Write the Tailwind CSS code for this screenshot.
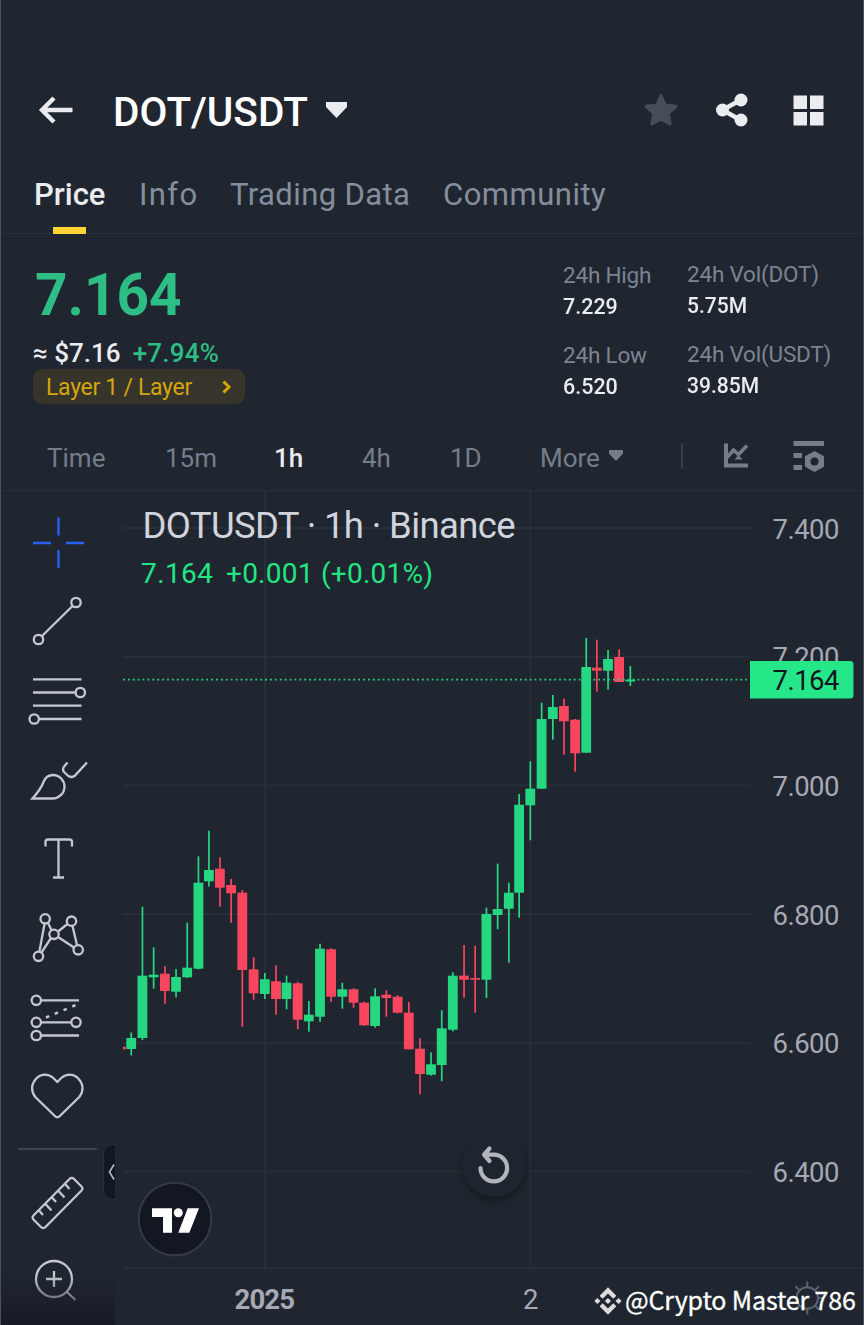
<!DOCTYPE html>
<html lang="en">
<head>
	<meta charset="UTF-8">
	<meta name="viewport" content="width=device-width, initial-scale=1.0">
	<title>DOT/USDT</title>
	<script src="https://cdn.jsdelivr.net/npm/@tailwindcss/browser@4"></script>
</head>
<body class="bg-[#202630] font-['Roboto','Liberation_Sans',sans-serif]">
<div class="relative flex flex-col w-[864px] h-[1325px] overflow-hidden">

	<!-- Header -->
	<header class="flex items-center h-[156px] pt-[68px] pl-[38px] pr-[40px]">
		<svg class="w-9 h-9 mb-1" viewBox="0 0 36 36" fill="none" stroke="#eaecef" stroke-width="4.400">
			<path d="M34.500 18H4M16 6 4 18l12 12"/>
		</svg>
		<h1 class="w-[213px] ml-[39px] text-[40.500px] font-medium text-white leading-none">DOT/USDT</h1>
		<svg class="w-[21px] h-4 mb-1" viewBox="0 0 21 16" fill="#eaecef"><path d="M0 0h21v5L10.500 16 0 5z"/></svg>
		<div class="flex items-center ml-auto mb-1">
			<svg class="w-9 h-9" viewBox="0 0 36 36" fill="#474d57" stroke="#474d57" stroke-width="3" stroke-linejoin="round">
				<path d="m18 3.500 4.300 9.500 10.700 1.300-7.800 7.100 2 10.600-9.200-4.800L8.800 32l2-10.600L3 14.300 13.700 13z"/>
			</svg>
			<svg class="w-9 h-9 ml-[36px]" viewBox="0 0 36 36" fill="#eaecef">
				<path d="M25.500 8 7.500 18l18 10" fill="none" stroke="#eaecef" stroke-width="4.500"/>
				<circle cx="7.500" cy="18" r="6.500"/><circle cx="26" cy="8" r="6.500"/><circle cx="26" cy="28" r="6.500"/>
			</svg>
			<svg class="w-[31px] h-[31px] ml-[42px]" viewBox="0 0 31 31" fill="#eaecef">
				<path d="M.5.5h13.500V14H.5zM17 .5h13.500V14H17zM.5 17h13.500v13.500H.5zM17 17h13.500v13.500H17z"/>
			</svg>
		</div>
	</header>

	<!-- Tabs -->
	<nav class="flex h-[78px] pl-[34px] border-b border-[#2a303a] text-[31px] leading-[77px] text-[#848e9c]">
		<a class="relative w-[105px] font-medium text-[#eaecef]">Price
			<span class="absolute left-[19px] -bottom-px w-[33px] h-[7px] bg-[#fcd535]"></span>
		</a>
		<a class="w-[91px] tracking-[1.400px]">Info</a>
		<a class="w-[213px] tracking-[0.400px]">Trading Data</a>
		<a class="tracking-[0.500px]">Community</a>
	</nav>

	<!-- Price and 24h stats -->
	<section class="flex h-[192px] pl-[33px]">
		<div class="w-[530px] pt-[31px]">
			<div class="ml-[2px] origin-left scale-x-[0.945] text-[60px] leading-[60px] font-bold text-[#2ebd85]">7.164</div>
			<div class="flex gap-[12px] mt-[13px] text-[26px] leading-[30px] font-medium">
				<span class="text-[#eaecef]">≈ $7.16</span>
				<span class="tracking-[0.200px] text-[#2ebd85]">+7.94%</span>
			</div>
			<div class="flex items-center w-[212px] h-[35px] mt-px pl-[13px] pr-[13px] rounded-[9px] bg-[#37342c] text-[23px] text-[#d5a50b]">
				<span class="pt-[3px] tracking-[-0.300px]">Layer 1 / Layer</span>
				<svg class="w-[10px] h-[14px] ml-auto" viewBox="0 0 10 14" fill="none" stroke="#d5a50b" stroke-width="3"><path d="m1.500 1.500 5.500 5.500-5.500 5.500"/></svg>
			</div>
		</div>
		<div class="w-[124px] pt-[26px] text-[22.500px] leading-[31px] text-[#eaecef]">
			<div class="tracking-[-0.200px] text-[#7c8491]">24h High</div>
			<div class="origin-left scale-x-[0.955] font-medium">7.229</div>
			<div class="mt-[18px] tracking-[-0.200px] text-[#7c8491]">24h Low</div>
			<div class="origin-left scale-x-[0.955] font-medium">6.520</div>
		</div>
		<div class="pt-[25px] text-[22.500px] leading-[31px] text-[#eaecef]">
			<div class="tracking-[-0.200px] text-[#7c8491]">24h Vol(DOT)</div>
			<div class="origin-left scale-x-[0.935] font-medium">5.75M</div>
			<div class="mt-[18px] tracking-[-0.200px] text-[#7c8491]">24h Vol(USDT)</div>
			<div class="origin-left scale-x-[0.935] font-medium">39.85M</div>
		</div>
	</section>

	<!-- Intervals -->
	<nav class="flex items-center h-[65px] pl-[47px] border-b border-[#2a303a] text-[26px] text-[#767d8a]">
		<span class="w-[118px]">Time</span>
		<span class="w-[109px]">15m</span>
		<span class="w-[88px] font-medium text-[#eaecef]">1h</span>
		<span class="w-[88px]">4h</span>
		<span class="w-[90px]">1D</span>
		<span class="w-[69px]">More</span>
		<svg class="w-[14px] h-[11px] mb-[6px]" viewBox="0 0 14 11" fill="#767d8a"><path d="M0 0h14v3.500L7 11 0 3.500z"/></svg>
		<span class="w-[2px] h-[26px] ml-[58px] mb-1 bg-[#373d47]"></span>
		<svg class="w-6 h-[25px] ml-[41px] mb-[6px]" viewBox="0 0 24 25" fill="none" stroke="#767d8a" stroke-width="4">
			<path d="M2 .5v22h22"/>
			<path d="m3 14.500 6.500-7.500 5 4.500 8.500-9" stroke-width="3.500"/>
			<path d="m14.500 12 4 4.500h-8z" fill="#767d8a" stroke="none"/>
		</svg>
		<svg class="w-8 h-8 ml-[45px] mb-[2px]" viewBox="0 0 32 32" fill="#767d8a">
			<path d="M.5 0H31v5H.5zM.5 12H9v5H.5zM.5 24H9v5H.5z"/>
			<path fill-rule="evenodd" d="m21.500 10 9.500 5.300v10.400L21.500 31 12 25.700V15.300zm0 6.500a4 4 0 1 0 0 8 4 4 0 0 0 0-8z"/>
		</svg>
	</nav>

	<div class="flex h-[834px]">
		<!-- Drawing tools -->
		<aside class="relative flex flex-col w-[115px] pt-3 pl-[28px] overflow-hidden">
			<svg class="w-[60px] h-[79px]" viewBox="28 503 60 79" fill="none" stroke="#2962ff" stroke-width="2.300">
				<path d="M58.500 517.500v18M58.500 550v18M33 543h18M66 543h18"/>
			</svg>
			<svg class="w-[60px] h-[79px]" viewBox="28 582 60 79" fill="none" stroke="#c5c7d1" stroke-width="2.300">
				<circle cx="76" cy="602.500" r="4.700"/><circle cx="38.500" cy="639.500" r="4.700"/><path d="m42 636 30.500-30"/>
			</svg>
			<svg class="w-[60px] h-[79px]" viewBox="28 661 60 79" fill="none" stroke="#c5c7d1" stroke-width="2.300">
				<path d="M33 679.300h48.500M33 692.500h42.500M33 705.700h48.500M39 719h42.500"/><circle cx="80.300" cy="692.500" r="4.700"/><circle cx="34.200" cy="719" r="4.700"/>
			</svg>
			<svg class="w-[60px] h-[79px]" viewBox="28 740 60 79" fill="none" stroke="#c5c7d1" stroke-width="2.300">
				<path d="M32.500 798.500H52a12 12 0 0 0 12.500-12c0-6-5-11.500-11.500-11.500-5 0-8 3-9.500 7-2.500 7-7 12-11 16.500zM67.500 762.500l-3 3.500q-3 3.500 0 6.500l4 3.500q3 2 6 0l12.500-13.500"/>
			</svg>
			<svg class="w-[60px] h-[79px]" viewBox="28 819 60 79" fill="none" stroke="#c5c7d1" stroke-width="2.300">
				<path d="M45.500 846.500V842q0-2.500 2.500-2.500h21.500q2.500 0 2.500 2.500v4.500M58.500 839.500v38M53 877.500h11"/>
			</svg>
			<svg class="w-[60px] h-[79px]" viewBox="28 898 60 79" fill="none" stroke="#c5c7d1" stroke-width="2.300">
				<path d="m44.500 924-5 27M48 923l3.500 7M41.500 952.500l9.500-14.500M58 931.500l9.500-7.500M58 937l16 10.500M72.500 926l4.500 19"/>
				<circle cx="45.200" cy="918.800" r="4.700"/><circle cx="71.500" cy="921.200" r="4.700"/><circle cx="54" cy="934.300" r="4.700"/><circle cx="38.500" cy="956.300" r="4.700"/><circle cx="78.200" cy="949.800" r="4.700"/>
			</svg>
			<svg class="w-[60px] h-[79px]" viewBox="28 977 60 79" fill="none" stroke="#c5c7d1" stroke-width="2.300">
				<path d="M41.500 1000.300H79M41.500 1022.300h29.500M41.500 1035.500H79"/>
				<path d="m46 1017.500 31-13" stroke-width="2.500" stroke-dasharray="3.500 6"/>
				<circle cx="36.300" cy="1000.300" r="4.700"/><circle cx="36.300" cy="1022.300" r="4.700"/><circle cx="76" cy="1022.300" r="4.700"/><circle cx="36.300" cy="1035.500" r="4.700"/>
			</svg>
			<svg class="w-[60px] h-[79px]" viewBox="28 1056 60 79" fill="none" stroke="#c5c7d1" stroke-width="2.300" stroke-linejoin="round">
				<path d="m57.300 1082-4-4c-5-4.500-12-4.500-16.500 0-6 6-6 13-1.500 19l19.500 19q2.500 2.500 5 0l19.500-19c4.500-6 4.500-13-1.500-19-4.500-4.500-11.500-4.500-16.500 0z"/>
			</svg>
			<div class="w-[79px] h-[2px] mt-[13px] -ml-[10px] mb-[14px] bg-[#3f444f]"></div>
			<svg class="w-[60px] h-[79px]" viewBox="28 1164 60 79" fill="none" stroke="#c5c7d1" stroke-width="2.300" stroke-linejoin="round">
				<path d="M69.500 1179q2.300-2.300 4.600 0l7.200 7.200q2.300 2.300 0 4.600L45.500 1227q-2.300 2.300-4.600 0l-7.200-7.200q-2.300-2.300 0-4.600zM39 1210.500l4 4.500M45.500 1204l6 6.500M52 1197.500l4 4.500M58.500 1191l6 6.500M65.500 1184.500l4 4.500"/>
			</svg>
			<svg class="w-[60px] h-[79px]" viewBox="28 1243 60 79" fill="none" stroke="#c5c7d1" stroke-width="2.300">
				<circle cx="54" cy="1279" r="18"/><path d="M46 1279h16M54 1271v16M67 1292l8.500 8"/>
			</svg>
			<div class="absolute left-0 bottom-0 w-[115px] h-[50px] bg-linear-to-b from-[#161a25]/0 to-[#161a25]"></div>
			<div class="absolute left-[103px] top-[653px] w-[24px] h-[56px] rounded-[10px] border border-[#2a2e39] bg-[#131722]">
				<svg class="w-[12px] h-[54px]" viewBox="0 0 12 54" fill="none" stroke="#b2b5be" stroke-width="1.700"><path d="M10 19.500 5.500 27l4.500 7.500"/></svg>
			</div>
		</aside>

		<!-- Chart -->
		<svg class="w-[749px] h-[834px]" viewBox="115 491 749 834" font-family="Roboto, 'Liberation Sans', sans-serif">
			<path fill="none" stroke="#292e38" stroke-width="2" d="M123 528h627M123 656.700h627M123 785.500h627M123 914h627M123 1043h627M123 1171.500h627M123 1268.300h741M265 491v777M530.300 491v777"/>
			<g id="candles"></g>
			<path d="M123 679.700h627" stroke="#2bd07f" stroke-width="1.700" stroke-dasharray="1.800 3.100"/>

			<text x="142.500" y="538" font-size="36.500" fill="#d1d4dc" textLength="373">DOTUSDT · 1h · Binance</text>
			<g font-size="28" fill="#22e584">
				<text x="141" y="582.500" textLength="72">7.164</text>
				<text x="226" y="582.500" textLength="207">+0.001 (+0.01%)</text>
			</g>

			<g font-size="27.500" fill="#a6a9b3">
				<text x="772.500" y="538.500" textLength="67">7.400</text>
				<text x="772.500" y="667" textLength="67">7.200</text>
				<text x="772.500" y="796" textLength="67">7.000</text>
				<text x="772.500" y="924.500" textLength="67">6.800</text>
				<text x="772.500" y="1053" textLength="67">6.600</text>
				<text x="772.500" y="1181.500" textLength="67">6.400</text>
				<text x="234.500" y="1308.500" font-weight="700" textLength="60.500">2025</text>
				<text x="523" y="1308.500">2</text>
			</g>
			<path fill="#26e788" d="M750 661h100q3.500 0 3.500 3.500V695q0 3.500-3.500 3.500H750z"/>
			<text x="772.500" y="689.500" font-size="27.500" fill="#10151d" textLength="67">7.164</text>

			<!-- TradingView badge -->
			<circle cx="175" cy="1219" r="36.300" fill="#131722" stroke="#363a45" stroke-width="2"/>
			<path fill="#fff" d="M152 1208.300h20v24.400h-9V1217h-11zM187.700 1208.300h11.300l-9.700 24.400h-11z"/>
			<circle cx="178.300" cy="1212.700" r="4.500" fill="#fff"/>

			<!-- Reset button -->
			<circle cx="494" cy="1165" r="32" fill="#1f252e" class="drop-shadow-[0_4px_4px_rgba(0,0,0,0.35)]"/>
			<path fill="none" stroke="#b2b5be" stroke-width="4.200" stroke-linecap="round" stroke-linejoin="round" d="M480.500 1168a13.300 13.300 0 1 0 13.300-13.300h-9M489.500 1148.500l-5.500 6.200 5.500 6.300"/>

			<!-- Axis settings -->
			<g fill="none" stroke="#5d636e" stroke-width="2">
				<circle cx="807.300" cy="1298" r="10.800"/>
				<path d="M807.300 1287v-5.500M807.300 1309v5.500M796.300 1298h-5.500M818.300 1298h5.500M799.500 1290.200l-4-4M815.100 1290.200l4-4M799.500 1305.800l-4 4M815.100 1305.800l4 4"/>
			</g>

			<!-- Watermark -->
			<g transform="translate(594.300 1287.300) scale(1.140)" fill="#dcdcdc">
				<path d="M16.624 13.920l2.718 2.715-7.353 7.353-7.353-7.352 2.718-2.716 4.635 4.659 4.635-4.659zM21.260 9.284 24 12l-2.715 2.716L18.568 12zM11.988 9.285l2.716 2.691-2.716 2.717L9.272 12zM2.716 9.284 5.409 12l-2.692 2.692L0 12zM11.988.011l7.353 7.329-2.717 2.715-4.636-4.635-4.635 4.659-2.717-2.715z"/>
			</g>
			<text x="625" y="1310" font-size="25" fill="#fff" stroke="#fff" stroke-width="0.300" font-family="'Noto Sans CJK SC', 'Noto Sans', sans-serif" textLength="231">@Crypto Master 786</text>
		</svg>
	</div>

	<div class="absolute inset-0 border-x border-[#4b505a]"></div>
</div>

<script>
	// x, high, body top, body bottom, low, up
	const candles = [
		[131.2, 1032.5, 1038, 1049, 1055.5, 1],
		[142.4, 906.7, 975.7, 1038, 1040, 1],
		[153.6, 947.3, 974.7, 977.3, 988.7, 1],
		[164.9, 966, 973.7, 991, 1003.7, 0],
		[176, 969, 977, 991.7, 997.3, 1],
		[187.2, 922.7, 967.7, 977.3, 978, 1],
		[198.4, 856.3, 882.7, 968.7, 969.3, 1],
		[208.9, 830.7, 870, 881.3, 886.7, 1],
		[219.9, 857.3, 868.7, 887.7, 906.7, 0],
		[231.1, 879, 885, 893.3, 922.7, 0],
		[242.3, 890, 892.7, 970, 1026.7, 0],
		[253.6, 957.3, 969.3, 993.3, 999.7, 0],
		[264.8, 973, 979.3, 994, 999, 1],
		[276, 965.3, 981.3, 999, 1014.7, 0],
		[286.5, 975.7, 982.7, 999, 1009.3, 1],
		[297.7, 981.7, 983.3, 1019.7, 1029.3, 0],
		[308.8, 1001, 1014.7, 1021.3, 1031.7, 1],
		[320, 943.7, 948.7, 1016.7, 1022, 1],
		[331.1, 948.3, 949.3, 996.7, 1002, 0],
		[342.3, 982.7, 989.3, 996.7, 1008.7, 1],
		[353.5, 988.3, 989.3, 1002.7, 1007.7, 0],
		[364.1, 1001.7, 1002.7, 1025.3, 1026, 0],
		[375.1, 988.3, 996.3, 1026, 1027.7, 1],
		[386.3, 990.3, 994.7, 998, 1016.7, 0],
		[397.6, 995.3, 996.7, 1012.7, 1013.5, 0],
		[408.8, 1002, 1012.7, 1049.3, 1049.3, 0],
		[420, 1038.3, 1048.7, 1074, 1094.3, 0],
		[431, 1052.3, 1064.3, 1074.7, 1075.7, 1],
		[441.7, 1010.3, 1028.3, 1065, 1081.3, 1],
		[452.8, 972.3, 975.7, 1029.7, 1031.3, 1],
		[464, 945, 975.7, 979.7, 997.7, 0],
		[475.1, 945.7, 978, 979.7, 1012.7, 0],
		[486.4, 907.7, 914, 979.7, 998, 1],
		[497.6, 863.7, 909, 915, 929.3, 1],
		[508.8, 882.7, 892.7, 908.7, 962.7, 1],
		[519.1, 794, 804.7, 892.7, 917.7, 1],
		[530.3, 761.3, 788.7, 805.3, 840.3, 1],
		[541.6, 702.7, 719, 788.7, 788.7, 1],
		[552.8, 695, 707, 719, 739.7, 1],
		[563.9, 698.7, 706, 721.3, 754.7, 0],
		[575.1, 719, 719.7, 753.3, 771.7, 0],
		[586.2, 638, 667, 752.7, 752.7, 1],
		[596.8, 639.7, 667.7, 670.7, 691.7, 0],
		[608, 650, 659, 670.7, 689.7, 1],
		[619.1, 649.3, 657, 682, 682, 0],
		[630.3, 666, 679.7, 681.5, 686, 1],
	];

	let out = '<rect x="123" y="1046.700" width="2.700" height="2.800" fill="#f7465d"/>';
	for (const [x, high, top, bottom, low, up] of candles) {
		const color = up ? '#26d782' : '#f7465d';
		out += `<rect x="${x - 0.8}" y="${high}" width="1.700" height="${low - high}" fill="${color}"/>`;
		out += `<rect x="${x - 4.9}" y="${top}" width="9.800" height="${bottom - top}" fill="${color}"/>`;
	}
	document.getElementById('candles').innerHTML = out;
</script>
</body>
</html>
